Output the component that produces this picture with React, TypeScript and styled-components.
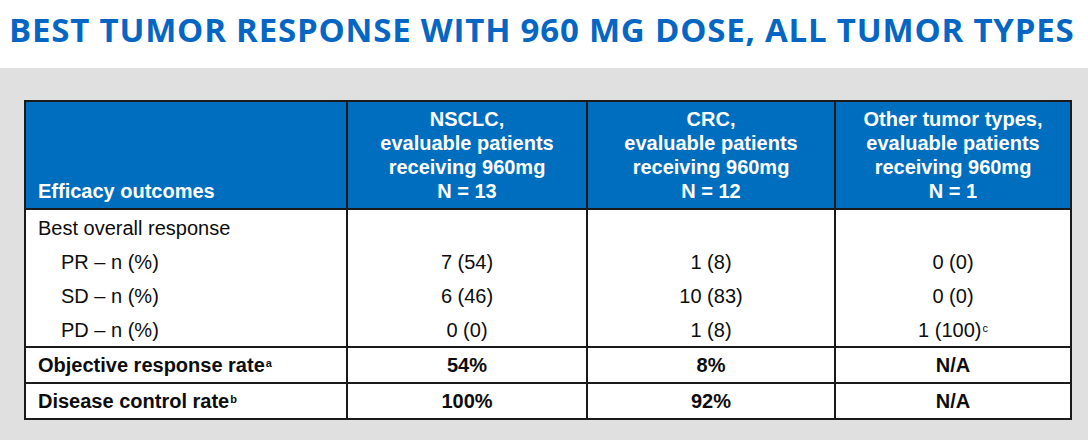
import React from 'react'
import styled, { createGlobalStyle } from 'styled-components'

const GlobalStyle = createGlobalStyle`
  html, body {
    margin: 0;
    padding: 0;
    background: #ffffff;
  }
`

const Page = styled.div`
  width: 1088px;
  height: 440px;
  display: flex;
  flex-direction: column;
  overflow: hidden;
`

const TitleBar = styled.div`
  height: 68px;
  background: #ffffff;
  display: flex;
  align-items: flex-start;
  padding-left: 9px;
  box-sizing: border-box;
`

const Title = styled.h1`
  margin: 8px 0 0 0;
  font-family: 'Open Sans', 'Liberation Sans', sans-serif;
  font-weight: 700;
  font-size: 33px;
  letter-spacing: 0.8px;
  line-height: 44px;
  color: #0566c4;
  white-space: nowrap;
`

const Stage = styled.div`
  flex: 1;
  background: #e0e0e0;
  padding: 32px 0 0 24px;
`

const Table = styled.table`
  border-collapse: collapse;
  width: 1046px;
  table-layout: fixed;
  font-family: 'Liberation Sans', Arial, sans-serif;
  font-size: 20px;
  color: #0d0d0d;
  background: #ffffff;
  border: 2px solid #1a1a1a;
`

const HeadCell = styled.th<{ $left?: boolean }>`
  background: #006ebf;
  color: #ffffff;
  font-weight: 700;
  font-size: 20px;
  line-height: 24px;
  height: 108px;
  padding: 0 4px 5px ${p => (p.$left ? '12px' : '4px')};
  box-sizing: border-box;
  vertical-align: bottom;
  text-align: ${p => (p.$left ? 'left' : 'center')};
  border: 2px solid #1a1a1a;
`

const Cell = styled.td<{ $indent?: boolean; $left?: boolean; $h: number; $bold?: boolean; $top?: boolean }>`
  height: ${p => p.$h}px;
  padding: 0 4px 0 ${p => (p.$indent ? '35px' : p.$left ? '12px' : '4px')};
  box-sizing: border-box;
  text-align: ${p => (p.$left || p.$indent ? 'left' : 'center')};
  vertical-align: middle;
  font-weight: ${p => (p.$bold ? 700 : 400)};
  line-height: 24px;
  border-left: 2px solid #1a1a1a;
  border-right: 2px solid #1a1a1a;
  border-top: ${p => (p.$top ? '2px solid #1a1a1a' : 'none')};
`

const Sup = styled.sup`
  font-size: 11px;
  line-height: 0;
  vertical-align: 5px;
  margin-left: 1px;
`

type Row = {
  label: string
  values: string[]
  indent?: boolean
  h: number
  sup?: string[]
  labelSup?: string
  bold?: boolean
  top?: boolean
}

const rows: Row[] = [
  { label: 'Best overall response', values: ['', '', ''], h: 36 },
  { label: 'PR – n (%)', values: ['7 (54)', '1 (8)', '0 (0)'], indent: true, h: 34 },
  { label: 'SD – n (%)', values: ['6 (46)', '10 (83)', '0 (0)'], indent: true, h: 34 },
  { label: 'PD – n (%)', values: ['0 (0)', '1 (8)', '1 (100)'], indent: true, h: 34, sup: ['', '', 'c'] },
  { label: 'Objective response rate', labelSup: 'a', values: ['54%', '8%', 'N/A'], h: 36, bold: true, top: true },
  { label: 'Disease control rate', labelSup: 'b', values: ['100%', '92%', 'N/A'], h: 36, bold: true, top: true },
]

const heads = [
  ['NSCLC,', 'evaluable patients', 'receiving 960mg', 'N = 13'],
  ['CRC,', 'evaluable patients', 'receiving 960mg', 'N = 12'],
  ['Other tumor types,', 'evaluable patients', 'receiving 960mg', 'N = 1'],
]

const App = () => {
  return (
    <Page>
      <GlobalStyle />
      <TitleBar>
        <Title>BEST TUMOR RESPONSE WITH 960 MG DOSE, ALL TUMOR TYPES</Title>
      </TitleBar>
      <Stage>
        <Table>
          <colgroup>
            <col style={{ width: 322 }} />
            <col style={{ width: 240 }} />
            <col style={{ width: 248 }} />
            <col style={{ width: 236 }} />
          </colgroup>
          <thead>
            <tr>
              <HeadCell $left>Efficacy outcomes</HeadCell>
              {heads.map((lines, i) => (
                <HeadCell key={i}>
                  {lines.map((l, j) => (
                    <div key={j}>{l}</div>
                  ))}
                </HeadCell>
              ))}
            </tr>
          </thead>
          <tbody>
            {rows.map((r, i) => (
              <tr key={i}>
                <Cell $h={r.h} $left $indent={r.indent} $bold={r.bold} $top={r.top}>
                  {r.label}
                  {r.labelSup && <Sup>{r.labelSup}</Sup>}
                </Cell>
                {r.values.map((v, j) => (
                  <Cell key={j} $h={r.h} $bold={r.bold} $top={r.top}>
                    {v}
                    {r.sup && r.sup[j] && <Sup>{r.sup[j]}</Sup>}
                  </Cell>
                ))}
              </tr>
            ))}
          </tbody>
        </Table>
      </Stage>
    </Page>
  )
}

export default App
